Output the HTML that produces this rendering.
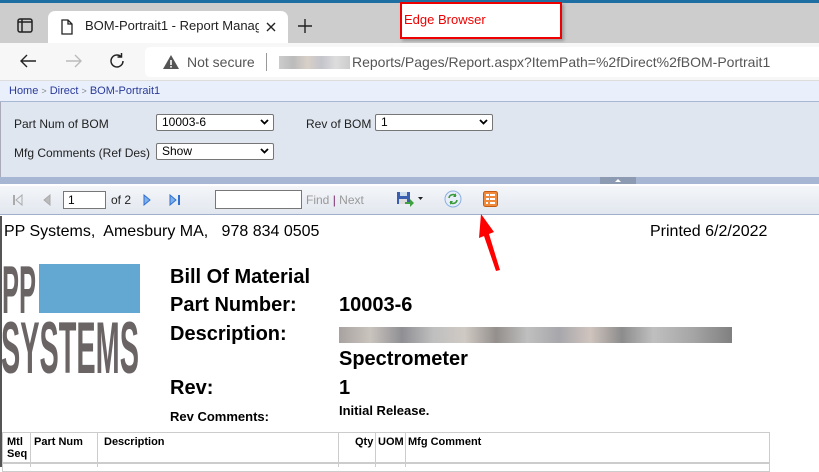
<!DOCTYPE html>
<html><head><meta charset="utf-8"><style>
*{margin:0;padding:0;box-sizing:border-box}
body{width:819px;height:467px;overflow:hidden;background:#fff;font-family:"Liberation Sans",sans-serif;position:relative}
.a{position:absolute}
.sel{position:absolute;height:17px;border:1px solid #767676;border-radius:2px;background:#fff;font-size:12px;padding-left:5px;line-height:15px;color:#000}
.sel svg{position:absolute;right:4px;top:4px}
.lbl{position:absolute;font-size:12px;color:#222}
.b{position:absolute;font-weight:bold;font-size:20px;color:#000}
.th{position:absolute;font-size:11px;font-weight:bold;color:#000}
</style></head><body>
<div class="a" style="left:0;top:0;width:819px;height:3px;background:#1d6fa3"></div>
<div class="a" style="left:0;top:3px;width:819px;height:40px;background:#cdcdcd"></div>
<svg class="a" style="left:17px;top:18px" width="16" height="16"><rect x="1" y="1" width="14" height="13" rx="2" fill="none" stroke="#222" stroke-width="1.5"/><line x1="5" y1="1" x2="5" y2="14" stroke="#222" stroke-width="1.5"/><line x1="1" y1="4" x2="15" y2="4" stroke="#222" stroke-width="1.5"/></svg>
<div class="a" style="left:48px;top:11px;width:240px;height:32px;background:#fff;border-radius:7px 7px 0 0"></div>
<svg class="a" style="left:61px;top:19px" width="12" height="16"><path d="M1 1h6l4 4v10H1z M7 1v4h4" fill="none" stroke="#222" stroke-width="1.3"/></svg>
<div class="a" style="left:85px;top:18px;font-size:13px;color:#222;white-space:nowrap;width:174px;overflow:hidden">BOM-Portrait1 - Report Manager</div>
<svg class="a" style="left:266px;top:22px" width="10" height="10"><path d="M1 1L9 9M9 1L1 9" stroke="#222" stroke-width="1.4"/></svg>
<svg class="a" style="left:298px;top:19px" width="14" height="14"><path d="M7 0v14M0 7h14" stroke="#222" stroke-width="1.4"/></svg>
<div class="a" style="left:400px;top:2px;width:162px;height:37px;background:#fff;border:2px solid #e00;box-shadow:2px 2px 3px #999"></div>
<div class="a" style="left:404px;top:12px;font-size:13px;color:#e00">Edge Browser</div>
<div class="a" style="left:0;top:43px;width:819px;height:38px;background:#f7f7f7;border-bottom:1px solid #ddd"></div>
<svg class="a" style="left:19px;top:53px" width="18" height="16"><path d="M17 8H2M8 2L2 8l6 6" fill="none" stroke="#222" stroke-width="1.4"/></svg>
<svg class="a" style="left:65px;top:53px" width="18" height="16"><path d="M1 8h15M10 2l6 6-6 6" fill="none" stroke="#bbb" stroke-width="1.4"/></svg>
<svg class="a" style="left:108px;top:52px" width="18" height="18"><path d="M15 9a6 6 0 1 1-2-4.5M13.5 1v4h-4" fill="none" stroke="#222" stroke-width="1.5"/></svg>
<div class="a" style="left:145px;top:47px;width:674px;height:30px;background:#fff;border-radius:5px 0 0 5px"></div>
<svg class="a" style="left:162px;top:54px" width="18" height="16"><path d="M9 1L17 15H1z" fill="#555"/><rect x="8.2" y="6" width="1.6" height="5" fill="#fff"/><rect x="8.2" y="12" width="1.6" height="1.6" fill="#fff"/></svg>
<div class="a" style="left:187px;top:54px;font-size:14px;color:#555">Not secure</div>
<div class="a" style="left:266px;top:53px;width:1px;height:18px;background:#999"></div>
<div class="a" style="left:279px;top:56px;width:71px;height:13px;background:linear-gradient(90deg,#ccc,#bbb 20%,#d8d0c8 40%,#c4c4cc 60%,#ddd 80%,#ccc)"></div>
<div class="a" style="left:352px;top:54px;font-size:14px;color:#555;white-space:nowrap">Reports/Pages/Report.aspx?ItemPath=%2fDirect%2fBOM-Portrait1</div>
<div class="a" style="left:0;top:81px;width:819px;height:21px;background:#e9f0fb;border-bottom:1px solid #a8b8d4"></div>
<div class="a" style="left:9px;top:85px;font-size:11px;color:#2a3a9a">Home <span style="color:#888;font-size:9px">&gt;</span> Direct <span style="color:#888;font-size:9px">&gt;</span> BOM-Portrait1</div>
<div class="a" style="left:0;top:102px;width:819px;height:75px;background:#dfe6f0;border-left:1px solid #aab"></div>
<div class="lbl" style="left:14px;top:117px">Part Num of BOM</div>
<div class="sel" style="left:156px;top:114px;width:118px">10003-6<svg width="9" height="6"><path d="M1 1l3.5 3.5L8 1" fill="none" stroke="#000" stroke-width="1.8"/></svg></div>
<div class="lbl" style="left:306px;top:117px">Rev of BOM</div>
<div class="sel" style="left:375px;top:114px;width:118px">1<svg width="9" height="6"><path d="M1 1l3.5 3.5L8 1" fill="none" stroke="#000" stroke-width="1.8"/></svg></div>
<div class="lbl" style="left:14px;top:146px">Mfg Comments (Ref Des)</div>
<div class="sel" style="left:156px;top:143px;width:118px">Show<svg width="9" height="6"><path d="M1 1l3.5 3.5L8 1" fill="none" stroke="#000" stroke-width="1.8"/></svg></div>
<div class="a" style="left:0;top:177px;width:819px;height:7px;background:#a7b7d3"></div>
<div class="a" style="left:600px;top:177px;width:36px;height:7px;background:#8c9ab2"></div>
<div class="a" style="left:615px;top:179px;width:0;height:0;border-left:3px solid transparent;border-right:3px solid transparent;border-bottom:3px solid #fff"></div>
<div class="a" style="left:0;top:185px;width:819px;height:30px;background:linear-gradient(#f4f6f9,#e2e7ef);border-top:1px solid #fff;border-bottom:1px solid #9fb0cb"></div>
<svg class="a" style="left:12px;top:194px" width="12" height="12"><rect x="1" y="1" width="2" height="10" fill="#aaa"/><path d="M10 1L4 6l6 5z" fill="none" stroke="#aaa"/></svg>
<svg class="a" style="left:43px;top:194px" width="8" height="12"><path d="M7 1L1 6l6 5z" fill="#bbb" stroke="#aaa"/></svg>
<div class="a" style="left:63px;top:191px;width:43px;height:18px;background:#fff;border:1px solid #777;font-size:12px;padding-left:4px;line-height:16px">1</div>
<div class="a" style="left:111px;top:193px;font-size:12px;color:#222">of 2</div>
<svg class="a" style="left:143px;top:194px" width="8" height="12"><path d="M1 1l6 5-6 5z" fill="#7fb0ec" stroke="#2f6fcf"/></svg>
<svg class="a" style="left:169px;top:194px" width="12" height="12"><path d="M1 1l6 5-6 5z" fill="#7fb0ec" stroke="#2f6fcf"/><rect x="9" y="1" width="2" height="10" fill="#2f6fcf"/></svg>
<div class="a" style="left:215px;top:190px;width:87px;height:19px;background:#fff;border:1px solid #777"></div>
<div class="a" style="left:306px;top:193px;font-size:12px;color:#999">Find <span style="color:#7a2a6a">|</span> Next</div>
<svg class="a" style="left:396px;top:191px" width="28" height="16"><rect x="1" y="1" width="13" height="12" fill="#3a5fb0"/><rect x="4" y="1" width="7" height="4" fill="#cde"/><rect x="3" y="8" width="8" height="5" fill="#ddd"/><path d="M9 11h5v-3l4 4-4 4v-3H9z" fill="#3fa040"/><path d="M22 6h5l-2.5 3z" fill="#222"/></svg>
<svg class="a" style="left:444px;top:190px" width="18" height="18"><circle cx="9" cy="9" r="8" fill="#e7eefa" stroke="#8ab0e0"/><path d="M5 8a4 4 0 0 1 7-2M13 10a4 4 0 0 1-7 2" fill="none" stroke="#3a9a3a" stroke-width="1.6"/><path d="M12 3v4h-3zM6 15v-4h3z" fill="#3a9a3a"/></svg>
<svg class="a" style="left:483px;top:191px" width="15" height="16"><rect x="0.5" y="0.5" width="14" height="15" rx="2" fill="#f08a3a" stroke="#c55a10"/><rect x="3" y="3" width="3" height="2" fill="#fff"/><rect x="7" y="3" width="5" height="2" fill="#fff"/><rect x="3" y="7" width="3" height="2" fill="#fff"/><rect x="7" y="7" width="5" height="2" fill="#fff"/><rect x="3" y="11" width="2" height="2" fill="#fff"/><rect x="7" y="11" width="5" height="2" fill="#fff"/></svg>
<div class="a" style="left:0;top:216px;width:2px;height:251px;background:#555"></div>
<div class="a" style="left:4px;top:223px;font-size:16px;color:#000;white-space:pre">PP Systems,  Amesbury MA,   978 834 0505</div>
<div class="a" style="left:650px;top:223px;font-size:16px;color:#000">Printed 6/2/2022</div>
<svg class="a" style="left:476px;top:212px" width="30" height="62"><path d="M5 2l13 18-5 2 11 36-4 1-12-35-5 2z" fill="#f00"/></svg>
<div class="a" style="left:39px;top:264px;width:101px;height:49px;background:#62a8d3"></div>
<svg class="a" style="left:0;top:262px" width="142" height="114"><text x="2" y="51" font-family="Liberation Sans Narrow,Liberation Sans,sans-serif" font-weight="bold" font-size="68" fill="#6a6465" textLength="34" lengthAdjust="spacingAndGlyphs">PP</text><text x="1" y="111" font-family="Liberation Sans Narrow,Liberation Sans,sans-serif" font-weight="bold" font-size="73" fill="#6a6465" textLength="138" lengthAdjust="spacingAndGlyphs">SYSTEMS</text></svg>
<div class="b" style="left:170px;top:266px">Bill Of Material</div>
<div class="b" style="left:170px;top:294px">Part Number:</div>
<div class="b" style="left:339px;top:294px">10003-6</div>
<div class="b" style="left:170px;top:323px">Description:</div>
<div class="a" style="left:339px;top:327px;width:393px;height:16px;background:linear-gradient(90deg,#8a8480,#b8b0a8 8%,#6a6a70 16%,#aaa 24%,#c0b8b0 32%,#706a66 40%,#aaa 48%,#8a8a90 56%,#c0b0a8 64%,#666 72%,#aaa 80%,#888 90%,#555);opacity:.75"></div>
<div class="b" style="left:339px;top:348px">Spectrometer</div>
<div class="b" style="left:170px;top:377px">Rev:</div>
<div class="b" style="left:339px;top:377px">1</div>
<div class="a" style="left:170px;top:409px;font-size:13px;font-weight:bold">Rev Comments:</div>
<div class="a" style="left:339px;top:403px;font-size:13px;font-weight:bold">Initial Release.</div>
<div class="a" style="left:2px;top:432px;width:768px;height:40px;border:1px solid #ccc"></div>
<div class="a" style="left:2px;top:462px;width:768px;height:2px;background:#ccc"></div>
<div class="a" style="left:30px;top:432px;width:1px;height:35px;background:#ccc"></div>
<div class="a" style="left:97px;top:432px;width:1px;height:35px;background:#ccc"></div>
<div class="a" style="left:338px;top:432px;width:1px;height:35px;background:#ccc"></div>
<div class="a" style="left:375px;top:432px;width:1px;height:35px;background:#ccc"></div>
<div class="a" style="left:405px;top:432px;width:1px;height:35px;background:#ccc"></div>
<div class="th" style="left:7px;top:436px;line-height:12px">Mtl<br>Seq</div>
<div class="th" style="left:34px;top:436px">Part Num</div>
<div class="th" style="left:104px;top:436px">Description</div>
<div class="th" style="left:355px;top:436px">Qty</div>
<div class="th" style="left:378px;top:436px">UOM</div>
<div class="th" style="left:408px;top:436px">Mfg Comment</div>
</body></html>
